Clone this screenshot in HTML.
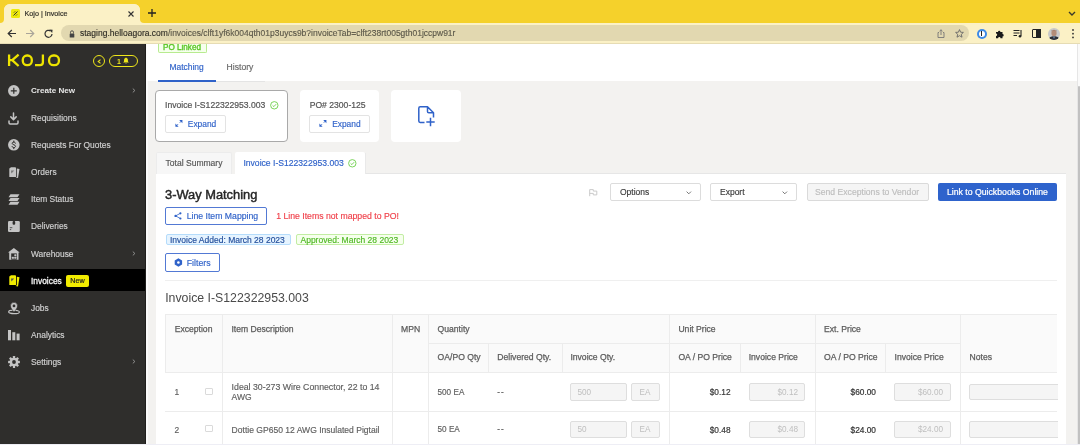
<!DOCTYPE html>
<html><head><meta charset="utf-8"><style>
*{margin:0;padding:0;box-sizing:border-box}
html,body{width:1080px;height:445px;overflow:hidden;background:#f3f2f0;font-family:"Liberation Sans",sans-serif}
body{will-change:transform}
.a{position:absolute}
.t{position:absolute;white-space:nowrap;line-height:1}
svg{position:absolute;overflow:visible}
</style></head><body>
<div class="a" style="left:0;top:0;width:1080px;height:23px;background:#f5d12b"></div>
<div class="a" style="left:4px;top:4px;width:136px;height:20px;background:#fbf1c6;border-radius:6px 6px 0 0"></div>
<div class="a" style="left:0;top:23px;width:1080px;height:21px;background:#fbf1c6"></div>
<div class="a" style="left:0;top:17px;width:144px;height:7px;background:#fbf1c6"></div>
<div class="a" style="left:0;top:0;width:4px;height:23px;background:#f5d12b;border-bottom-right-radius:4px"></div>
<div class="a" style="left:140px;top:0;width:4px;height:23px;background:#f5d12b;border-bottom-left-radius:4px"></div>
<div class="a" style="left:4px;top:4px;width:136px;height:20px;background:#fbf1c6;border-radius:6px 6px 0 0"></div>
<div class="a" style="left:0;top:43px;width:1080px;height:1px;background:#e6dcb4"></div>
<div class="a" style="left:11px;top:9px;width:9px;height:9px;background:#eeea0a;border-radius:1.5px"></div>
<svg style="left:11px;top:9px" width="9" height="9"><path d="M2.5 6.5 L6.5 2.5 M3 3.5 L4 2.5 M5 6.5 L6 5.5" stroke="#333" stroke-width="1"/></svg>
<div class="t" style="left:24.5px;top:9.68px;font-size:7.2px;color:#35332c;-webkit-text-stroke:0.2px #35332c">Kojo | Invoice</div>
<svg style="left:127.5px;top:10.8px" width="6" height="6"><path d="M0.5 0.5 L5.5 5.5 M5.5 0.5 L0.5 5.5" stroke="#333" stroke-width="1.1"/></svg>
<svg style="left:148px;top:9.3px" width="8" height="8"><path d="M4 0 V8 M0 4 H8" stroke="#222" stroke-width="1.3"/></svg>
<svg style="left:1068px;top:11px" width="8" height="5"><path d="M1 1 L4 4 L7 1" stroke="#3a3a2a" stroke-width="1.4" fill="none"/></svg>
<svg style="left:7px;top:29px" width="10" height="9"><path d="M9 4.5 H1.5 M4.8 1 L1.2 4.5 L4.8 8" stroke="#333" stroke-width="1.2" fill="none"/></svg>
<svg style="left:25px;top:29px" width="10" height="9"><path d="M1 4.5 H8.5 M5.2 1 L8.8 4.5 L5.2 8" stroke="#aaa59a" stroke-width="1.1" fill="none"/></svg>
<svg style="left:44px;top:29px" width="10" height="10"><path d="M8 5 A3.5 3.5 0 1 1 6.6 2" stroke="#333" stroke-width="1.2" fill="none"/><path d="M5.2 0.6 L8.6 0.8 L8.2 4 Z" fill="#333"/></svg>
<div class="a" style="left:61px;top:25px;width:908px;height:16px;background:#e2d8b0;border-radius:8px"></div>
<svg style="left:68.5px;top:29.5px" width="6" height="8"><path d="M1.5 3.5 V2.3 A1.5 1.5 0 0 1 4.5 2.3 V3.5" stroke="#444" stroke-width="0.9" fill="none"/><rect x="0.7" y="3.5" width="4.6" height="4" rx="0.6" fill="#444"/></svg>
<div class="t" style="left:80px;top:29px;font-size:8.5px;color:#2c2a24;-webkit-text-stroke:0.12px #2c2a24">staging.helloagora.com<span style="color:#6b6756">/invoices/clft1yf6k004qth01p3uycs9b?invoiceTab=clft238rt005gth01jccpw91r</span></div>
<svg style="left:937px;top:29px" width="8" height="9"><path d="M2 3.5 H1 V8.5 H7 V3.5 H6 M4 6 V0.8 M2.5 2.2 L4 0.8 L5.5 2.2" stroke="#777" stroke-width="0.9" fill="none"/></svg>
<svg style="left:955px;top:29px" width="9" height="9"><path d="M4.5 0.6 L5.6 3.2 L8.4 3.4 L6.3 5.3 L7 8.2 L4.5 6.7 L2 8.2 L2.7 5.3 L0.6 3.4 L3.4 3.2 Z" stroke="#666" stroke-width="0.9" fill="none"/></svg>
<div class="a" style="left:976.5px;top:28.5px;width:10px;height:10px;border-radius:50%;background:#3d8ae6"></div>
<div class="a" style="left:978.5px;top:30.5px;width:6px;height:6px;border-radius:50%;background:#fff"></div>
<div class="a" style="left:981px;top:31.3px;width:1px;height:4.4px;background:#222"></div>
<svg style="left:995px;top:29px" width="10" height="10"><path d="M1 3 H3 A1.2 1.2 0 0 1 5.4 3 H7.5 V5 A1.2 1.2 0 0 1 7.5 7.4 V9.2 H5.5 A1.2 1.2 0 0 0 3.1 9.2 H1 V7 A1.2 1.2 0 0 0 1 4.6 Z" fill="#1a1a1a"/></svg>
<svg style="left:1013px;top:29px" width="10" height="9"><path d="M0.5 1.5 H6.5 M0.5 4 H6.5 M0.5 6.5 H4" stroke="#222" stroke-width="1"/><path d="M8 1 V7" stroke="#222" stroke-width="1.1"/><circle cx="7" cy="7.3" r="1.3" fill="#222"/></svg>
<div class="a" style="left:1031.5px;top:29px;width:9px;height:9px;border:1.3px solid #222;border-radius:1px"></div>
<div class="a" style="left:1035.5px;top:29px;width:5px;height:9px;background:#222"></div>
<svg style="left:1047.5px;top:27.5px" width="12" height="12"><defs><clipPath id="av"><circle cx="6" cy="6" r="6"/></clipPath></defs><g clip-path="url(#av)"><rect width="12" height="12" fill="#c9c9c9"/><ellipse cx="6" cy="5" rx="2.6" ry="3.2" fill="#b38c78"/><path d="M3.3 3.6 C3.5 1.5 8.5 1.5 8.7 3.6 L8.4 2.5 C7 1.8 5 1.8 3.6 2.5 Z" fill="#3a3330"/><path d="M0.5 12 C1 9 3 8.3 6 8.3 C9 8.3 11 9 11.5 12 Z" fill="#2b2f38"/><path d="M5.2 8.4 L6 11 L6.8 8.4 Z" fill="#8fb3d9"/></g></svg>
<svg style="left:1071.5px;top:29px" width="2" height="10"><circle cx="1" cy="1" r="0.9" fill="#333"/><circle cx="1" cy="4.7" r="0.9" fill="#333"/><circle cx="1" cy="8.4" r="0.9" fill="#333"/></svg>
<div class="a" style="left:0;top:44px;width:146px;height:401px;background:#2f2e2c"></div>
<svg style="left:0px;top:0px" width="70" height="70"><g stroke="#eee400" stroke-width="2.3" fill="none" stroke-linejoin="round" stroke-linecap="butt"><path d="M9.1 54.5 V66.1 M9.1 60.2 H12.2 L18.6 54.6 M12.2 60.2 L18.6 66"/><rect x="22.8" y="55.5" width="9" height="9.6" rx="4.2"/><path d="M35 65.05 H40 A2.9 2.9 0 0 0 42.9 62.15 V54.5"/><rect x="49.1" y="55.5" width="9.8" height="9.6" rx="4.2"/></g></svg>
<div class="a" style="left:93.2px;top:54.8px;width:12.2px;height:12.2px;border:1.2px solid #ede51b;border-radius:50%"></div>
<svg style="left:97px;top:58.5px" width="5" height="5"><path d="M3.5 0.6 L1.2 2.5 L3.5 4.4" stroke="#ede51b" stroke-width="1.1" fill="none"/></svg>
<div class="a" style="left:108.8px;top:54.8px;width:29px;height:12.2px;border:1.2px solid #ede51b;border-radius:6.1px"></div>
<div class="t" style="left:117px;top:57.6px;font-size:7px;font-weight:700;color:#ede51b">1</div>
<svg style="left:123px;top:57.3px" width="6" height="7"><path d="M3 0.4 A0.6 0.6 0 0 1 3.6 1 C5 1.4 5 3 5 4.6 L5.8 5.6 H0.2 L1 4.6 C1 3 1 1.4 2.4 1 A0.6 0.6 0 0 1 3 0.4 Z M2.2 6 H3.8 L3 6.8 Z" fill="#ede51b"/></svg>
<div class="a" style="left:0;top:268.8px;width:146px;height:22.6px;background:#000"></div>
<div class="t" style="left:31px;top:86.53px;font-size:8.1px;font-weight:700;color:#e8e8e8">Create New</div>
<div class="t" style="left:31px;top:114.15px;font-size:8.4px;color:#d2d2d2;-webkit-text-stroke:0.15px #d2d2d2">Requisitions</div>
<div class="t" style="left:31px;top:141.23px;font-size:8.4px;color:#d2d2d2;-webkit-text-stroke:0.15px #d2d2d2">Requests For Quotes</div>
<div class="t" style="left:31px;top:168.31px;font-size:8.4px;color:#d2d2d2;-webkit-text-stroke:0.15px #d2d2d2">Orders</div>
<div class="t" style="left:31px;top:195.39px;font-size:8.4px;color:#d2d2d2;-webkit-text-stroke:0.15px #d2d2d2">Item Status</div>
<div class="t" style="left:31px;top:222.47px;font-size:8.4px;color:#d2d2d2;-webkit-text-stroke:0.15px #d2d2d2">Deliveries</div>
<div class="t" style="left:31px;top:249.55px;font-size:8.4px;color:#d2d2d2;-webkit-text-stroke:0.15px #d2d2d2">Warehouse</div>
<div class="t" style="left:31px;top:276.63px;font-size:8.4px;color:#f4f4f4;-webkit-text-stroke:0.3px #f4f4f4">Invoices</div>
<div class="t" style="left:31px;top:303.71px;font-size:8.4px;color:#d2d2d2;-webkit-text-stroke:0.15px #d2d2d2">Jobs</div>
<div class="t" style="left:31px;top:330.79px;font-size:8.4px;color:#d2d2d2;-webkit-text-stroke:0.15px #d2d2d2">Analytics</div>
<div class="t" style="left:31px;top:357.87px;font-size:8.4px;color:#d2d2d2;-webkit-text-stroke:0.15px #d2d2d2">Settings</div>
<svg style="left:132.2px;top:88.1px" width="4" height="5"><path d="M0.8 0.6 L2.9 2.5 L0.8 4.4" stroke="#9a9a9a" stroke-width="0.9" fill="none"/></svg>
<svg style="left:132.2px;top:250.57999999999998px" width="4" height="5"><path d="M0.8 0.6 L2.9 2.5 L0.8 4.4" stroke="#9a9a9a" stroke-width="0.9" fill="none"/></svg>
<svg style="left:132.2px;top:358.9px" width="4" height="5"><path d="M0.8 0.6 L2.9 2.5 L0.8 4.4" stroke="#9a9a9a" stroke-width="0.9" fill="none"/></svg>
<div class="a" style="left:65.6px;top:274.6px;width:23.6px;height:12.4px;background:#f2ec00;border-radius:2px"></div>
<div class="t" style="left:70.3px;top:277.28px;font-size:7.2px;color:#222;-webkit-text-stroke:0.2px #222">New</div>
<svg style="left:8.4px;top:84.8px" width="12" height="12"><circle cx="5.8" cy="5.8" r="5.8" fill="#c4c4c4"/><path d="M5.8 2.8 V8.8 M2.8 5.8 H8.8" stroke="#2f2e2c" stroke-width="1.2"/></svg>
<svg style="left:8.2px;top:111.5px" width="12" height="13"><path d="M5.5 1 V7.3 M2.8 4.9 L5.5 7.6 L8.2 4.9" stroke="#c4c4c4" stroke-width="1.5" fill="none" stroke-linecap="round" stroke-linejoin="round"/><path d="M1 9 V10.8 A1.2 1.2 0 0 0 2.2 12 H8.8 A1.2 1.2 0 0 0 10 10.8 V9" stroke="#c4c4c4" stroke-width="1.5" fill="none" stroke-linecap="round"/></svg>
<svg style="left:8.3px;top:139.29999999999998px" width="12" height="12"><circle cx="5.8" cy="5.8" r="5.8" fill="#c4c4c4"/><path d="M7.4 4.2 C7.2 3.4 6.6 3.1 5.8 3.1 C4.8 3.1 4.2 3.6 4.2 4.4 C4.2 6 7.5 5.5 7.5 7.3 C7.5 8.1 6.8 8.6 5.8 8.6 C4.9 8.6 4.3 8.2 4.1 7.4 M5.8 2 V3.1 M5.8 8.6 V9.7" stroke="#2f2e2c" stroke-width="1" fill="none" stroke-linecap="round"/></svg>
<svg style="left:8.5px;top:167px" width="11" height="11"><path d="M0.3 1.4 L2 0.3 H6.5 L7 1 V10 H0.3 Z" fill="#c4c4c4"/><path d="M7.8 1.5 L10.5 2 L9 11 L6.5 10.6 L7.8 10 Z" fill="#c4c4c4"/><path d="M2 3.6 H5.2 L2.4 6.6 Z" fill="#777"/></svg>
<svg style="left:8px;top:193.7px" width="12" height="12"><path d="M2.5 0.3 H11.5 L9.5 3.3 H0.5 Z M2.5 4 H11.5 L9.5 7 H0.5 Z M2.5 7.7 H11.5 L9.5 10.8 H0.5 Z" fill="#c4c4c4"/></svg>
<svg style="left:8.3px;top:220.9px" width="12" height="12"><rect x="0" y="0" width="11.8" height="11.1" rx="1.3" fill="#c4c4c4"/><rect x="4.6" y="0" width="2.6" height="3.8" rx="1" fill="#2f2e2c"/><path d="M1.8 6.7 H4.3 M1.8 8.6 H3.2" stroke="#444" stroke-width="0.9"/></svg>
<svg style="left:8.3px;top:247.7px" width="12" height="12"><path d="M0 4.6 L5.85 0 L11.7 4.6 H10.5 V11.7 H1.2 V4.6 Z" fill="#c4c4c4"/><rect x="3.2" y="5.4" width="5.6" height="6.3" fill="#2f2e2c"/><rect x="3.9" y="8.8" width="2" height="2" rx="0.5" fill="#c4c4c4"/><rect x="6.3" y="8.8" width="2" height="2" rx="0.5" fill="#c4c4c4"/><rect x="6.3" y="6.2" width="2" height="2" rx="0.5" fill="#c4c4c4"/></svg>
<svg style="left:8.5px;top:274.9px" width="11" height="12"><path d="M0.3 1.4 L2 0.3 H6.5 L7 1 V10 H0.3 Z" fill="#f2ec00"/><path d="M7.8 1.7 L10.5 2.2 L9 11.5 L6.5 11 L7.8 10.2 Z" fill="#f2ec00"/><path d="M2 3.6 H5.2 L2.4 6.6 Z" fill="#555"/></svg>
<svg style="left:8px;top:302px" width="12" height="12"><ellipse cx="6" cy="9.9" rx="5.4" ry="1.75" stroke="#c4c4c4" stroke-width="1.1" fill="none"/><path d="M6 10.2 C4 7.6 2.5 6 2.5 3.8 A3.5 3.5 0 0 1 9.5 3.8 C9.5 6 8 7.6 6 10.2 Z" fill="#c4c4c4" stroke="#2f2e2c" stroke-width="0.6"/><circle cx="6" cy="3.9" r="1.4" fill="#2f2e2c"/></svg>
<svg style="left:8.3px;top:329.9px" width="12" height="11"><rect x="0" y="0" width="3" height="10.3" fill="#c4c4c4"/><rect x="4.3" y="2.2" width="3" height="8.1" fill="#c4c4c4"/><rect x="8.6" y="3.6" width="3" height="6.7" fill="#c4c4c4"/></svg>
<svg style="left:7.9px;top:356px" width="12" height="12"><circle cx="6" cy="6" r="4.3" fill="#c4c4c4"/><rect x="4.85" y="0.1" width="2.3" height="11.8" rx="0.4" fill="#c4c4c4" transform="rotate(0 6 6)"/><rect x="4.85" y="0.1" width="2.3" height="11.8" rx="0.4" fill="#c4c4c4" transform="rotate(45 6 6)"/><rect x="4.85" y="0.1" width="2.3" height="11.8" rx="0.4" fill="#c4c4c4" transform="rotate(90 6 6)"/><rect x="4.85" y="0.1" width="2.3" height="11.8" rx="0.4" fill="#c4c4c4" transform="rotate(135 6 6)"/><circle cx="6" cy="6" r="1.9" fill="#2f2e2c"/></svg>
<div class="a" style="left:146px;top:44px;width:2px;height:401px;background:#fbfbfb"></div>
<div class="a" style="left:145px;top:44px;width:1px;height:401px;background:#1f1e1c"></div>
<div class="a" style="left:147px;top:44px;width:930px;height:37px;background:#fff"></div>
<div class="a" style="left:1077px;top:44px;width:3px;height:401px;background:#fafafa;border-left:1px solid #e6e6e6"></div>
<div class="a" style="left:1077.8px;top:85.5px;width:2.5px;height:380px;background:#c1c1c1;border-radius:2px"></div>
<div class="a" style="left:157.5px;top:44px;width:49.4px;height:8.7px;background:#f6ffed;border:1px solid #b7eb8f;border-top:none;border-radius:0 0 2px 2px"></div>
<div class="a" style="left:147px;top:44px;width:70px;height:10px;overflow:hidden"><div class="t" style="left:16px;top:0.10000000000000142px;font-size:8.15px;color:#5cc72a;-webkit-text-stroke:0.35px #5cc72a">PO Linked</div></div>
<div class="t" style="left:169.5px;top:63.35px;font-size:8.45px;color:#2f62c9;-webkit-text-stroke:0.15px #2f62c9">Matching</div>
<div class="t" style="left:226.6px;top:63.27px;font-size:8.6px;color:#666;-webkit-text-stroke:0.15px #666">History</div>
<div class="a" style="left:157.5px;top:81px;width:107.5px;height:1px;background:#e4e4e4"></div>
<div class="a" style="left:157.5px;top:80px;width:58px;height:2px;background:#2f62c9"></div>
<div class="a" style="left:155.4px;top:90.4px;width:132.2px;height:51.9px;background:#fff;border:1px solid #a9a9a9;border-radius:4px"></div>
<div class="a" style="left:299.7px;top:90.3px;width:79.5px;height:51.7px;background:#fff;border-radius:4px"></div>
<div class="a" style="left:391.2px;top:90.3px;width:70px;height:51.7px;background:#fff;border-radius:4px"></div>
<div class="t" style="left:165px;top:100.77px;font-size:8.6px;color:#555;-webkit-text-stroke:0.2px #555">Invoice I-S122322953.003</div>
<svg style="left:269.8px;top:100.9px" width="9" height="9"><circle cx="4.3" cy="4.3" r="3.7" stroke="#6ccf49" stroke-width="0.9" fill="none"/><path d="M2.6 4.4 L3.9 5.6 L6.1 3.2" stroke="#6ccf49" stroke-width="0.9" fill="none"/></svg>
<div class="t" style="left:309.7px;top:101.07px;font-size:8.6px;color:#555;-webkit-text-stroke:0.2px #555">PO# 2300-125</div>
<div class="a" style="left:165.1px;top:114.7px;width:60.5px;height:18px;background:#fff;border:1px solid #e3e3e3;border-radius:2px"></div>
<svg style="left:175.1px;top:120.3px" width="8" height="7"><path d="M1.2 6 L3 4.2 M6.6 0.9 L4.8 2.7" stroke="#2f62c9" stroke-width="0.9"/><path d="M0.4 3.6 V6.8 H3.6 Z M7.4 3.3 V0.1 H4.2 Z" fill="#2f62c9"/></svg>
<div class="t" style="left:187.8px;top:120.07px;font-size:8.4px;color:#2f62c9;-webkit-text-stroke:0.15px #2f62c9">Expand</div>
<div class="a" style="left:309.2px;top:114.7px;width:60.5px;height:18px;background:#fff;border:1px solid #e3e3e3;border-radius:2px"></div>
<svg style="left:319.2px;top:120.3px" width="8" height="7"><path d="M1.2 6 L3 4.2 M6.6 0.9 L4.8 2.7" stroke="#2f62c9" stroke-width="0.9"/><path d="M0.4 3.6 V6.8 H3.6 Z M7.4 3.3 V0.1 H4.2 Z" fill="#2f62c9"/></svg>
<div class="t" style="left:332.2px;top:120.07px;font-size:8.4px;color:#2f62c9;-webkit-text-stroke:0.15px #2f62c9">Expand</div>
<svg style="left:417.5px;top:105.5px" width="18" height="21"><path d="M6.5 16.5 H2.2 A1.4 1.4 0 0 1 0.8 15.1 V2.2 A1.4 1.4 0 0 1 2.2 0.8 H9.5 L15.5 6.8 V11.5 M9.5 0.8 V5.5 A1.3 1.3 0 0 0 10.8 6.8 H15.5" stroke="#2f62c9" stroke-width="1.5" fill="none" stroke-linejoin="round"/><path d="M12.5 11.8 V20.2 M8.3 16 H16.7" stroke="#2f62c9" stroke-width="1.5"/></svg>
<div class="a" style="left:155.6px;top:151.7px;width:76.6px;height:22px;background:#f7f7f7;border:1px solid #ececec;border-bottom:none;border-radius:2px 2px 0 0"></div>
<div class="a" style="left:235px;top:152.3px;width:130px;height:22px;background:#fff;border-radius:2px 2px 0 0"></div>
<div class="t" style="left:165.5px;top:158.7px;font-size:8.55px;color:#555;-webkit-text-stroke:0.15px #555">Total Summary</div>
<div class="t" style="left:243.4px;top:158.67px;font-size:8.6px;color:#2f62c9;-webkit-text-stroke:0.15px #2f62c9">Invoice I-S122322953.003</div>
<svg style="left:347.7px;top:158.7px" width="9" height="9"><circle cx="4.3" cy="4.3" r="3.7" stroke="#6ccf49" stroke-width="0.9" fill="none"/><path d="M2.6 4.4 L3.9 5.6 L6.1 3.2" stroke="#6ccf49" stroke-width="0.9" fill="none"/></svg>
<div class="a" style="left:155.6px;top:173.6px;width:910.4px;height:272px;background:#fff"></div>
<div class="a" style="left:365px;top:172.6px;width:701px;height:1px;background:#e6e6e6"></div>
<div class="a" style="left:364.5px;top:152.5px;width:1px;height:21px;background:#e9e9e9"></div>
<div class="t" style="left:165px;top:188.94px;font-size:12.85px;color:#262626;-webkit-text-stroke:0.45px #262626">3-Way Matching</div>
<svg style="left:588.8px;top:189px" width="9" height="8"><path d="M0.7 7.2 V0.6 H4.3 V2.1 H7.8 V5.9 H4.3 V4.4 H0.7" stroke="#c4c4c4" stroke-width="0.9" fill="none"/></svg>
<div class="a" style="left:610.4px;top:183.2px;width:91px;height:18px;background:#fff;border:1px solid #dcdcdc;border-radius:2px"></div>
<div class="t" style="left:620px;top:187.92px;font-size:8.5px;color:#3a3a3a;-webkit-text-stroke:0.15px #3a3a3a">Options</div>
<svg style="left:686.4px;top:190.5px" width="6" height="4"><path d="M0.6 0.6 L2.8 2.8 L5 0.6" stroke="#666" stroke-width="0.9" fill="none"/></svg>
<div class="a" style="left:710.4px;top:183.2px;width:86.3px;height:18px;background:#fff;border:1px solid #dcdcdc;border-radius:2px"></div>
<div class="t" style="left:720px;top:187.92px;font-size:8.5px;color:#3a3a3a;-webkit-text-stroke:0.15px #3a3a3a">Export</div>
<svg style="left:781.5px;top:190.5px" width="6" height="4"><path d="M0.6 0.6 L2.8 2.8 L5 0.6" stroke="#666" stroke-width="0.9" fill="none"/></svg>
<div class="a" style="left:806.5px;top:183.3px;width:122.4px;height:17.6px;background:#f5f5f5;border:1px solid #dadada;border-radius:2px"></div>
<div class="t" style="left:815px;top:187.75px;font-size:8.65px;color:#bdbdbd;-webkit-text-stroke:0.15px #bdbdbd">Send Exceptions to Vendor</div>
<div class="a" style="left:937.9px;top:183.3px;width:119.6px;height:17.6px;background:#2e63cc;border-radius:2px"></div>
<div class="t" style="left:947px;top:187.92px;font-size:8.7px;color:#fff;-webkit-text-stroke:0.22px #fff">Link to Quickbooks Online</div>
<div class="a" style="left:165.1px;top:206.7px;width:102.4px;height:17.9px;background:#fff;border:1px solid #5279d4;border-radius:2px"></div>
<svg style="left:173.5px;top:211.5px" width="8" height="8"><circle cx="1.6" cy="3.9" r="1.2" fill="#2f62c9"/><circle cx="6.4" cy="1.3" r="1.1" fill="#2f62c9"/><circle cx="6.4" cy="6.5" r="1.1" fill="#2f62c9"/><path d="M1.6 3.9 L6.4 1.3 M1.6 3.9 L6.4 6.5" stroke="#2f62c9" stroke-width="0.8"/></svg>
<div class="t" style="left:186.7px;top:211.82px;font-size:8.7px;color:#2f62c9;-webkit-text-stroke:0.15px #2f62c9">Line Item Mapping</div>
<div class="t" style="left:276.2px;top:212.42px;font-size:8.7px;color:#f0404a;-webkit-text-stroke:0.15px #f0404a">1 Line Items not mapped to PO!</div>
<div class="a" style="left:165.6px;top:233.7px;width:125.2px;height:11.6px;background:#e6f4ff;border:1px solid #b5dcfb;border-radius:2px"></div>
<div class="t" style="left:170px;top:235.72px;font-size:8.5px;color:#224e9c;-webkit-text-stroke:0.15px #224e9c">Invoice Added: March 28 2023</div>
<div class="a" style="left:295.6px;top:233.7px;width:108.4px;height:11.6px;background:#f6ffed;border:1px solid #c2eda3;border-radius:2px"></div>
<div class="t" style="left:300.5px;top:235.72px;font-size:8.5px;color:#4fb824;-webkit-text-stroke:0.15px #4fb824">Approved: March 28 2023</div>
<div class="a" style="left:165.1px;top:253.4px;width:54.7px;height:18.3px;background:#fff;border:1px solid #5279d4;border-radius:2px"></div>
<svg style="left:173.5px;top:258.3px" width="9" height="9"><path d="M4.4 0.3 L8.1 2.4 V6.6 L4.4 8.7 L0.7 6.6 V2.4 Z" fill="#2f62c9"/><circle cx="4.4" cy="4.5" r="1.3" fill="#fff"/></svg>
<div class="t" style="left:186.7px;top:258.57px;font-size:8.8px;color:#2f62c9;-webkit-text-stroke:0.15px #2f62c9">Filters</div>
<div class="a" style="left:165px;top:280px;width:892px;height:1px;background:#efefef"></div>
<div class="t" style="left:165.2px;top:292.01px;font-size:12.3px;color:#4a4a4a">Invoice I-S122322953.003</div>
<div class="a" style="left:164.8px;top:314.4px;width:892.7px;height:58.1px;background:#fafafa"></div>
<div class="a" style="left:164.8px;top:314.4px;width:892.7px;height:1px;background:#ececec"></div>
<div class="a" style="left:428.2px;top:343.2px;width:532px;height:1px;background:#ececec"></div>
<div class="a" style="left:164.8px;top:372.2px;width:892.7px;height:1px;background:#ececec"></div>
<div class="a" style="left:164.8px;top:411px;width:892.7px;height:1px;background:#ececec"></div>
<div class="a" style="left:164.8px;top:314.4px;width:1px;height:58px;background:#ececec"></div>
<div class="a" style="left:222.3px;top:314.4px;width:1px;height:131px;background:#ececec"></div>
<div class="a" style="left:391.8px;top:314.4px;width:1px;height:131px;background:#ececec"></div>
<div class="a" style="left:428.2px;top:314.4px;width:1px;height:131px;background:#ececec"></div>
<div class="a" style="left:668.8px;top:314.4px;width:1px;height:131px;background:#ececec"></div>
<div class="a" style="left:814.9px;top:314.4px;width:1px;height:131px;background:#ececec"></div>
<div class="a" style="left:960.2px;top:314.4px;width:1px;height:131px;background:#ececec"></div>
<div class="a" style="left:488.2px;top:343.2px;width:1px;height:29px;background:#ececec"></div>
<div class="a" style="left:561.6px;top:343.2px;width:1px;height:29px;background:#ececec"></div>
<div class="a" style="left:739.7px;top:343.2px;width:1px;height:29px;background:#ececec"></div>
<div class="a" style="left:884.8px;top:343.2px;width:1px;height:29px;background:#ececec"></div>
<div class="t" style="left:174.7px;top:325.37px;font-size:8.6px;color:#5c5c5c;-webkit-text-stroke:0.25px #5c5c5c">Exception</div>
<div class="t" style="left:231.4px;top:325.37px;font-size:8.6px;color:#5c5c5c;-webkit-text-stroke:0.25px #5c5c5c">Item Description</div>
<div class="t" style="left:401.1px;top:325.37px;font-size:8.6px;color:#5c5c5c;-webkit-text-stroke:0.25px #5c5c5c">MPN</div>
<div class="t" style="left:437.6px;top:325.37px;font-size:8.6px;color:#5c5c5c;-webkit-text-stroke:0.25px #5c5c5c">Quantity</div>
<div class="t" style="left:678.4px;top:325.37px;font-size:8.6px;color:#5c5c5c;-webkit-text-stroke:0.25px #5c5c5c">Unit Price</div>
<div class="t" style="left:824.1px;top:325.37px;font-size:8.6px;color:#5c5c5c;-webkit-text-stroke:0.25px #5c5c5c">Ext. Price</div>
<div class="t" style="left:437.6px;top:353.27px;font-size:8.6px;color:#5c5c5c;-webkit-text-stroke:0.25px #5c5c5c">OA/PO Qty</div>
<div class="t" style="left:497.3px;top:353.27px;font-size:8.6px;color:#5c5c5c;-webkit-text-stroke:0.25px #5c5c5c">Delivered Qty.</div>
<div class="t" style="left:570.4px;top:353.27px;font-size:8.6px;color:#5c5c5c;-webkit-text-stroke:0.25px #5c5c5c">Invoice Qty.</div>
<div class="t" style="left:678.4px;top:353.27px;font-size:8.6px;color:#5c5c5c;-webkit-text-stroke:0.25px #5c5c5c">OA / PO Price</div>
<div class="t" style="left:748.7px;top:353.27px;font-size:8.6px;color:#5c5c5c;-webkit-text-stroke:0.25px #5c5c5c">Invoice Price</div>
<div class="t" style="left:824.1px;top:353.27px;font-size:8.6px;color:#5c5c5c;-webkit-text-stroke:0.25px #5c5c5c">OA / PO Price</div>
<div class="t" style="left:894.5px;top:353.27px;font-size:8.6px;color:#5c5c5c;-webkit-text-stroke:0.25px #5c5c5c">Invoice Price</div>
<div class="t" style="left:969.6px;top:353.27px;font-size:8.6px;color:#5c5c5c;-webkit-text-stroke:0.25px #5c5c5c">Notes</div>
<div class="t" style="left:174.6px;top:388.47px;font-size:8.4px;color:#5e5e5e;-webkit-text-stroke:0.15px #5e5e5e">1</div>
<div class="a" style="left:205.2px;top:387.49999999999994px;width:7.4px;height:7.2px;border:1px solid #dadada;border-radius:1px;background:#fff"></div>
<div class="t" style="left:231.6px;top:383.2px;font-size:8.4px;color:#5e5e5e;-webkit-text-stroke:0.15px #5e5e5e;font-size:8.75px">Ideal 30-273 Wire Connector, 22 to 14</div>
<div class="t" style="left:231.6px;top:393.32px;font-size:8.4px;color:#5e5e5e;-webkit-text-stroke:0.15px #5e5e5e;font-size:8.5px">AWG</div>
<div class="t" style="left:437.5px;top:388.58px;font-size:8.4px;color:#5e5e5e;-webkit-text-stroke:0.15px #5e5e5e;font-size:8.2px">500 EA</div>
<div class="t" style="left:497.3px;top:388.58px;font-size:8.4px;color:#5e5e5e;-webkit-text-stroke:0.15px #5e5e5e;font-size:8.2px;letter-spacing:0.9px">--</div>
<div class="a" style="left:570.1px;top:383px;width:56.7px;height:17.899999999999977px;background:#f5f5f5;border:1px solid #dedede;border-radius:2px"></div>
<div class="t" style="left:577.4px;top:388.58px;font-size:8.2px;color:#bfbfbf">500</div>
<div class="a" style="left:631.1px;top:383px;width:28.6px;height:17.899999999999977px;background:#f5f5f5;border:1px solid #dedede;border-radius:2px"></div>
<div class="t" style="left:639.5px;top:388.58px;font-size:8.2px;color:#bfbfbf">EA</div>
<div class="t" style="right:349.5px;top:387.63px;font-size:8.3px;color:#3a3a3a;-webkit-text-stroke:0.2px #3a3a3a">$0.12</div>
<div class="a" style="left:748.8px;top:383px;width:56.7px;height:17.899999999999977px;background:#f5f5f5;border:1px solid #dedede;border-radius:2px"></div>
<div class="t" style="right:282px;top:388.58px;font-size:8.2px;color:#bfbfbf">$0.12</div>
<div class="t" style="right:204px;top:387.63px;font-size:8.3px;color:#333;-webkit-text-stroke:0.2px #333">$60.00</div>
<div class="a" style="left:894.3px;top:383px;width:56.4px;height:17.899999999999977px;background:#f5f5f5;border:1px solid #dedede;border-radius:2px"></div>
<div class="t" style="right:137px;top:388.58px;font-size:8.2px;color:#bfbfbf">$60.00</div>
<div class="a" style="left:969.1px;top:383.8px;width:95px;height:16.299999999999976px;background:#f5f5f5;border:1px solid #dedede;border-radius:2px"></div>
<div class="t" style="left:174.6px;top:426.07px;font-size:8.4px;color:#5e5e5e;-webkit-text-stroke:0.15px #5e5e5e">2</div>
<div class="a" style="left:205.2px;top:425.09999999999997px;width:7.4px;height:7.2px;border:1px solid #dadada;border-radius:1px;background:#fff"></div>
<div class="t" style="left:231.6px;top:426.0px;font-size:8.4px;color:#5e5e5e;-webkit-text-stroke:0.15px #5e5e5e;font-size:8.55px">Dottie GP650 12 AWG Insulated Pigtail</div>
<div class="t" style="left:437.5px;top:426.18px;font-size:8.4px;color:#5e5e5e;-webkit-text-stroke:0.15px #5e5e5e;font-size:8.2px">50 EA</div>
<div class="t" style="left:497.3px;top:426.18px;font-size:8.4px;color:#5e5e5e;-webkit-text-stroke:0.15px #5e5e5e;font-size:8.2px;letter-spacing:0.9px">--</div>
<div class="a" style="left:570.1px;top:420.5px;width:56.7px;height:17.899999999999977px;background:#f5f5f5;border:1px solid #dedede;border-radius:2px"></div>
<div class="t" style="left:577.4px;top:426.18px;font-size:8.2px;color:#bfbfbf">50</div>
<div class="a" style="left:631.1px;top:420.5px;width:28.6px;height:17.899999999999977px;background:#f5f5f5;border:1px solid #dedede;border-radius:2px"></div>
<div class="t" style="left:639.5px;top:426.18px;font-size:8.2px;color:#bfbfbf">EA</div>
<div class="t" style="right:349.5px;top:426.13px;font-size:8.3px;color:#3a3a3a;-webkit-text-stroke:0.2px #3a3a3a">$0.48</div>
<div class="a" style="left:748.8px;top:420.5px;width:56.7px;height:17.899999999999977px;background:#f5f5f5;border:1px solid #dedede;border-radius:2px"></div>
<div class="t" style="right:282px;top:426.18px;font-size:8.2px;color:#bfbfbf">$0.48</div>
<div class="t" style="right:204px;top:426.13px;font-size:8.3px;color:#333;-webkit-text-stroke:0.2px #333">$24.00</div>
<div class="a" style="left:894.3px;top:420.5px;width:56.4px;height:17.899999999999977px;background:#f5f5f5;border:1px solid #dedede;border-radius:2px"></div>
<div class="t" style="right:137px;top:426.18px;font-size:8.2px;color:#bfbfbf">$24.00</div>
<div class="a" style="left:969.1px;top:421.3px;width:95px;height:16.299999999999976px;background:#f5f5f5;border:1px solid #dedede;border-radius:2px"></div>
<div class="a" style="left:1057.5px;top:300px;width:8.5px;height:145px;background:#fff"></div>
<div class="a" style="left:0;top:443.6px;width:1080px;height:1.4px;background:#eeeef5"></div>
</body></html>
